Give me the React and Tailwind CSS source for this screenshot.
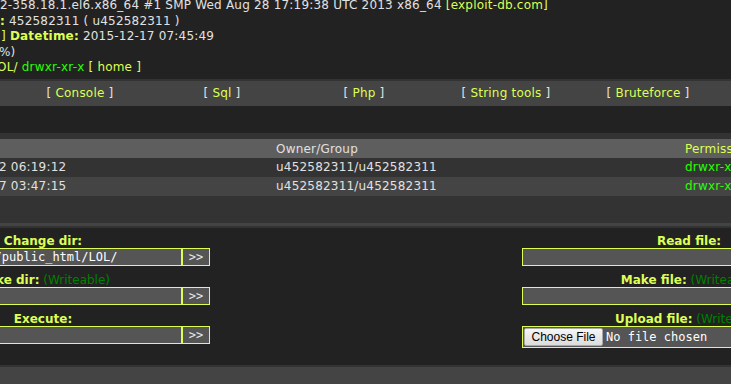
import React from "react";

// Dark web-shell style file manager, cropped view
const yellow = "text-[#df5]";
const mono = "font-['DejaVu_Sans_Mono',monospace] tracking-normal";

const MenuItem = ({ label }) => (
  <div className="w-[142px] shrink-0 flex justify-center pt-[3px] whitespace-nowrap">
    <span>
      [ <a className={yellow}>{label}</a> ]
    </span>
  </div>
);

const ToolInput = ({ value = "" }) => (
  <div className="flex shrink-0">
    <input
      type="text"
      defaultValue={value}
      className={`w-[306px] h-[18px] border border-[#df5] bg-[#555] text-white px-[2px] ${mono} text-[12px] outline-none`}
    />
    <button className={`w-[28px] h-[18px] border border-[#df5] bg-[#555] text-[#e8e8e8] ${mono} text-[12px] leading-none`}>
      &gt;&gt;
    </button>
  </div>
);

const FileInput = () => (
  <div className="flex shrink-0">
    <div className="w-[306px] h-[22px] border border-[#df5] bg-[#555] flex items-center pl-[1px]">
      <span className="h-[18px] w-[79px] flex items-center justify-center border border-[#a9a9a9] rounded-[2px] bg-gradient-to-b from-[#f6f6f6] to-[#dcdcdc] text-black font-['Liberation_Sans',Arial,sans-serif] tracking-normal text-[12px]">
        Choose File
      </span>
      <span className={`ml-[3px] text-white ${mono} text-[12px] whitespace-nowrap`}>
        No file chosen
      </span>
    </div>
    <button className={`w-[28px] h-[22px] border border-[#df5] bg-[#555] text-[#e8e8e8] ${mono} text-[12px] leading-none`}>
      &gt;&gt;
    </button>
  </div>
);

const Label = ({ children }) => (
  <div className="h-[14px] leading-[14px] tracking-normal whitespace-nowrap shrink-0">{children}</div>
);

const Writeable = () => <span className="text-[#008000]">(Writeable)</span>;

export default function App() {
  return (
    <div className="w-[731px] h-[384px] overflow-hidden bg-[#444] text-[12px] tracking-[0.2px] text-[#e1e1e1] font-['DejaVu_Sans',Verdana,sans-serif]">
      {/* Info */}
      <div className="h-[79px] bg-[#222] overflow-hidden whitespace-nowrap">
        <div className="mt-[-2px] leading-[15.5px]">
          <div>
            2-358.18.1.el6.x86_64 #1 SMP Wed Aug 28 17:19:38 UTC 2013 x86_64{" "}
            <a className={yellow}>[exploit-db.com]</a>
          </div>
          <div>
            <span className={`font-bold ${yellow}`}>:</span> 452582311 ( u452582311 )
          </div>
          <div>
            <a className={`${yellow} ml-[1px]`}>]</a>{" "}
            <span className={`font-bold ${yellow}`}>Datetime:</span> 2015-12-17 07:45:49
          </div>
          <div className="ml-[-1px]">%)</div>
          <div>
            <a className={`${yellow} ml-[-3px]`}>OL/</a>{" "}
            <span className="text-[#25ff00]">drwxr-xr-x</span>{" "}
            <a className={yellow}>[ home ]</a>
          </div>
        </div>
      </div>

      {/* Menu */}
      <div className="h-[27px] border-t-2 border-[#333] bg-[#444] flex">
        <div className="w-[9px] shrink-0" />
        <MenuItem label="Console" />
        <MenuItem label="Sql" />
        <MenuItem label="Php" />
        <MenuItem label="String tools" />
        <MenuItem label="Bruteforce" />
      </div>

      {/* Title bar */}
      <div className="h-[27px] bg-[#222]" />

      {/* Files table */}
      <div className="h-[90px] bg-[#333] pt-[6px] whitespace-nowrap">
        <div className="grid grid-cols-[276px_409px_1fr] h-[19px] pt-[3px] leading-[14px] bg-[#5e5e5e]">
          <div />
          <div>Owner/Group</div>
          <a className={yellow}>Permissions</a>
        </div>
        <div className="grid grid-cols-[276px_409px_1fr] h-[19px] pt-[2px] leading-[14px] bg-[#333]">
          <div className="ml-[-1px]">2 06:19:12</div>
          <div>u452582311/u452582311</div>
          <div className="text-[#25ff00]">drwxr-xr-x</div>
        </div>
        <div className="grid grid-cols-[276px_409px_1fr] h-[19px] pt-[2px] leading-[14px] bg-[#444]">
          <div className="ml-[-1px]">7 03:47:15</div>
          <div>u452582311/u452582311</div>
          <div className="text-[#25ff00]">drwxr-xr-x</div>
        </div>
      </div>

      <div className="h-[3px]" />

      {/* Tools */}
      <div className="h-[141px] border-y-2 border-[#333] bg-[#222] pt-[6px] flex flex-col gap-[7px]">
        <div className="flex">
          <div className="w-[86px] shrink-0 flex flex-col items-center">
            <Label>
              <span className={`font-bold ${yellow}`}>Change dir:</span>
            </Label>
            <ToolInput value="/home/u452582311/public_html/LOL/" />
          </div>
          <div className="ml-[436px] w-[334px] shrink-0 flex flex-col items-center">
            <Label>
              <span className={`font-bold ${yellow}`}>Read file:</span>
            </Label>
            <ToolInput />
          </div>
        </div>

        <div className="flex">
          <div className="w-[86px] shrink-0 flex flex-col items-center">
            <Label>
              <span className={`font-bold ${yellow}`}>Make dir:</span> <Writeable />
            </Label>
            <ToolInput />
          </div>
          <div className="ml-[436px] w-[334px] shrink-0 flex flex-col items-center">
            <Label>
              <span className={`font-bold ${yellow}`}>Make file:</span> <Writeable />
            </Label>
            <ToolInput />
          </div>
        </div>

        <div className="flex">
          <div className="w-[86px] shrink-0 flex flex-col items-center">
            <Label>
              <span className={`font-bold ${yellow}`}>Execute:</span>
            </Label>
            <ToolInput />
          </div>
          <div className="ml-[436px] w-[334px] shrink-0 flex flex-col items-center">
            <Label>
              <span className={`font-bold ${yellow}`}>Upload file:</span> <Writeable />
            </Label>
            <FileInput />
          </div>
        </div>
      </div>
    </div>
  );
}
